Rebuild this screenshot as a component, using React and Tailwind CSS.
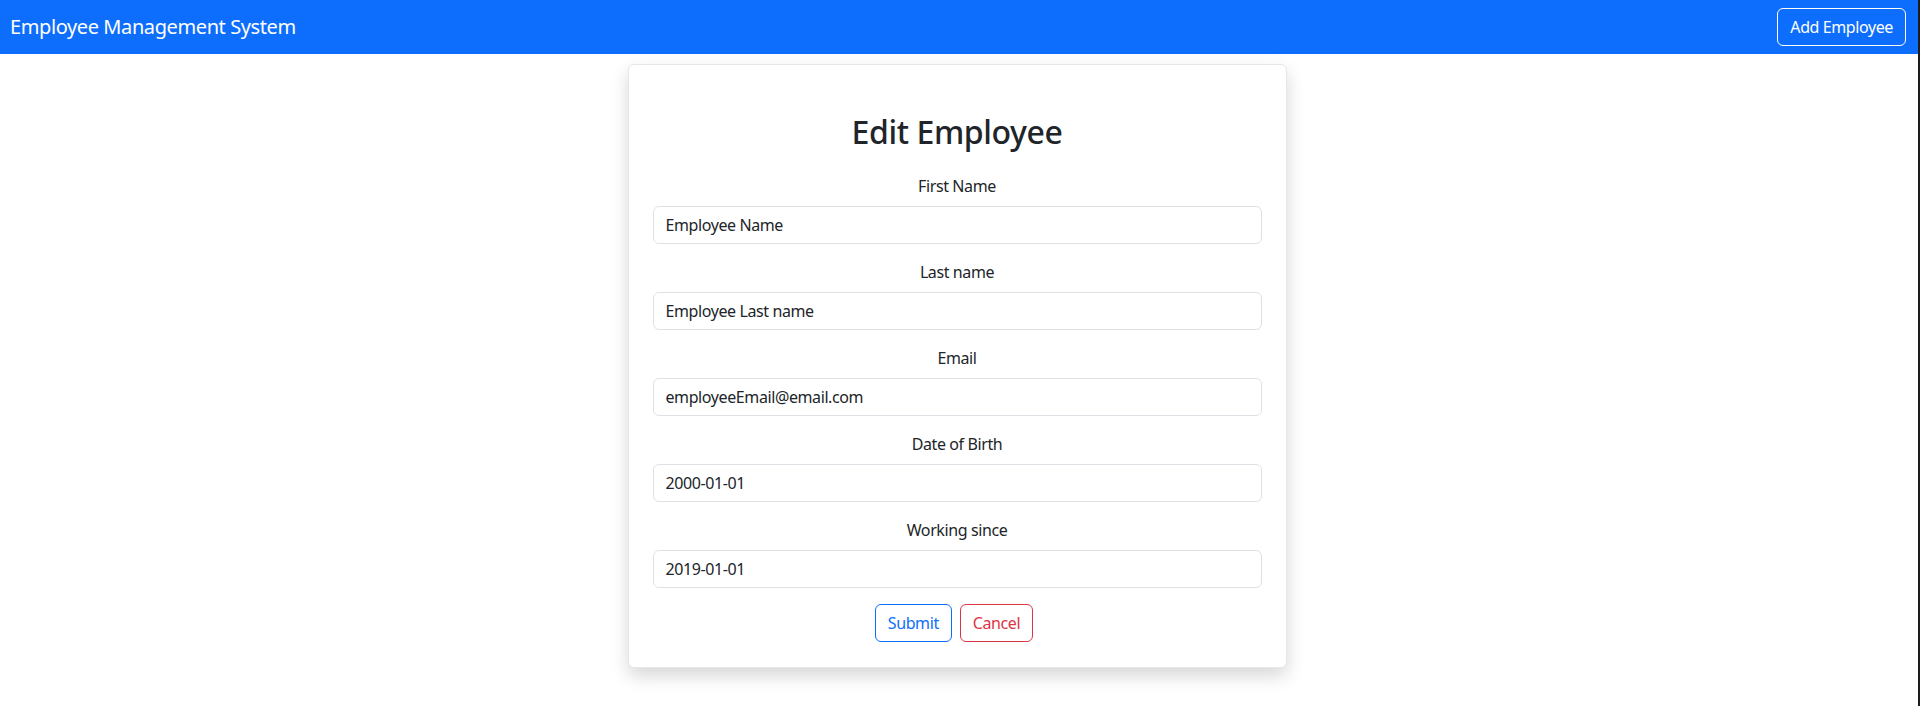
import React from "react";

const fields = [
  { label: "First Name", value: "Employee Name" },
  { label: "Last name", value: "Employee Last name" },
  { label: "Email", value: "employeeEmail@email.com" },
  { label: "Date of Birth", value: "2000-01-01" },
  { label: "Working since", value: "2019-01-01" },
];

const App = () => {
  return (
    <div className="min-h-[706px] bg-white text-[#212529] tracking-[-0.025em] border-r-2 border-[#1c1c1c] font-['Noto_Sans','Liberation_Sans',sans-serif]">
      <nav className="h-[54px] bg-[#0d6efd] flex items-center justify-between pl-[10px] pr-[12px]">
        <span className="text-white text-[20px]">Employee Management System</span>
        <button className="h-[38px] px-[12px] border border-white rounded-[6px] text-white text-[16px]">
          Add Employee
        </button>
      </nav>

      <div className="flex justify-center pt-[10px] pr-[4px]">
        <div className="w-[659px] bg-white rounded-[6px] border border-[#e5e7eb] shadow-[0_8px_18px_rgba(0,0,0,0.16)] px-[24px] pt-[48px] pb-[25px]">
          <h2 className="text-center text-[32px] leading-[38px] font-medium mb-[23px]">Edit Employee</h2>
          {fields.map((f) => (
            <div key={f.label} className="mb-[16px]">
              <label className="block text-center text-[16px] leading-[24px] mb-[8px]">{f.label}</label>
              <input
                readOnly
                value={f.value}
                className="w-full h-[38px] px-[12px] border border-[#dee2e6] rounded-[6px] text-[16px] outline-none"
              />
            </div>
          ))}
          <div className="flex justify-center gap-[8px] pr-[6px]">
            <button className="h-[38px] px-[12px] border border-[#0d6efd] rounded-[6px] text-[#0d6efd] text-[16px]">
              Submit
            </button>
            <button className="h-[38px] px-[12px] border border-[#dc3545] rounded-[6px] text-[#dc3545] text-[16px]">
              Cancel
            </button>
          </div>
        </div>
      </div>
    </div>
  );
};

export default App;
